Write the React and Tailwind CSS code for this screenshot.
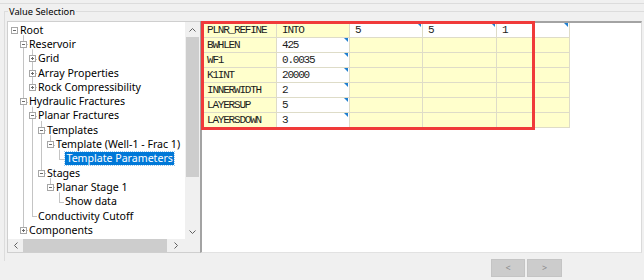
import React from "react";

const treeRows = [
  { t: "Root", l: 0, e: "-" },
  { t: "Reservoir", l: 1, e: "-" },
  { t: "Grid", l: 2, e: "+" },
  { t: "Array Properties", l: 2, e: "+" },
  { t: "Rock Compressibility", l: 2, e: "+" },
  { t: "Hydraulic Fractures", l: 1, e: "-" },
  { t: "Planar Fractures", l: 2, e: "-" },
  { t: "Templates", l: 3, e: "-" },
  { t: "Template (Well-1 - Frac 1)", l: 4, e: "-" },
  { t: "Template Parameters", l: 5, sel: true },
  { t: "Stages", l: 3, e: "-" },
  { t: "Planar Stage 1", l: 4, e: "-" },
  { t: "Show data", l: 5 },
  { t: "Conductivity Cutoff", l: 2 },
  { t: "Components", l: 1, e: "+" },
];

const RH = 14.3;
const cy = (i) => 8.15 + RH * i;
const lx = (l) => 6 + 9 * l;

const vlines = [
  [1, 0, 14],
  [2, 1, 4],
  [2, 5, 13],
  [3, 6, 10],
  [4, 7, 8],
  [5, 8, 9],
  [4, 10, 11],
  [5, 11, 12],
];

function Expander({ sign }) {
  return (
    <div className="relative w-[7px] h-[7px] border border-[#a6a6a6] bg-white shrink-0">
      <div className="absolute left-[1px] top-[2px] w-[3px] h-px bg-[#6a6a6a]" />
      {sign === "+" && (
        <div className="absolute left-[2px] top-[1px] w-px h-[3px] bg-[#6a6a6a]" />
      )}
    </div>
  );
}

function Tree() {
  return (
    <div className="relative w-[193px] h-[232px] border-l border-t border-b border-[#cfcfcf] bg-white overflow-hidden">
      <div className="relative w-[176px] h-[217px] pt-px">
        <svg className="absolute left-0 top-0" width="176" height="217">
          {vlines.map(([l, a, b], k) => (
            <line
              key={k}
              x1={lx(l) + 0.5}
              x2={lx(l) + 0.5}
              y1={cy(a) + 5}
              y2={cy(b) + 0.5}
              stroke="#c4c4c4"
              strokeWidth="1"
            />
          ))}
          {treeRows.map((r, i) =>
            r.l > 0 ? (
              <line
                key={"h" + i}
                x1={lx(r.l)}
                x2={lx(r.l) + 5}
                y1={Math.round(cy(i)) + 0.5}
                y2={Math.round(cy(i)) + 0.5}
                stroke="#c4c4c4"
                strokeWidth="1"
              />
            ) : null
          )}
        </svg>
        {treeRows.map((r, i) => (
          <div
            key={i}
            className="relative flex items-center h-[14.3px] text-[10.6px] text-black whitespace-nowrap"
          >
            <div className="shrink-0" style={{ width: 3 + 9 * r.l }} />
            {r.e ? <Expander sign={r.e} /> : <div className="w-[7px] shrink-0" />}
            {r.sel ? (
              <span className="ml-[2px] px-[1.5px] h-[13px] leading-[13px] bg-[#0078d7] text-white outline outline-1 outline-dotted outline-[#99c9ef]">
                {r.t}
              </span>
            ) : (
              <span className="ml-[2px] leading-[13px]">{r.t}</span>
            )}
          </div>
        ))}
      </div>
      {/* vertical scrollbar */}
      <div className="absolute right-0 top-0 w-[15px] h-[217px] bg-[#f0f0f0] flex flex-col items-center">
        <div className="h-[15px] flex items-center justify-center text-[#606060]">
          <svg width="7" height="4"><polyline points="0.5,3.5 3.5,0.5 6.5,3.5" fill="none" stroke="#606060" strokeWidth="1" /></svg>
        </div>
        <div className="w-[13px] h-[140px] bg-[#cdcdcd]" />
        <div className="flex-1" />
        <div className="h-[15px] flex items-center justify-center">
          <svg width="7" height="4"><polyline points="0.5,0.5 3.5,3.5 6.5,0.5" fill="none" stroke="#606060" strokeWidth="1" /></svg>
        </div>
      </div>
      {/* horizontal scrollbar */}
      <div className="absolute left-0 bottom-0 w-[193px] h-[13px] flex bg-[#f0f0f0]">
        <div className="w-[15px] flex items-center justify-center">
          <svg width="4" height="7"><polyline points="3.5,0.5 0.5,3.5 3.5,6.5" fill="none" stroke="#606060" strokeWidth="1" /></svg>
        </div>
        <div className="w-[144px] h-[13px] bg-[#cdcdcd]" />
        <div className="w-[18px] flex items-center justify-center">
          <svg width="4" height="7"><polyline points="0.5,0.5 3.5,3.5 0.5,6.5" fill="none" stroke="#606060" strokeWidth="1" /></svg>
        </div>
        <div className="flex-1 bg-[#f0f0f0]" />
      </div>
    </div>
  );
}

const colW = [75, 73, 73, 74, 73];

const gridRows = [
  ["PLNR_REFINE", "INTO", "5", "5", "1"],
  ["BWHLEN", "425", "", "", ""],
  ["WF1", "0.0035", "", "", ""],
  ["K1INT", "20000", "", "", ""],
  ["INNERWIDTH", "2", "", "", ""],
  ["LAYERSUP", "5", "", "", ""],
  ["LAYERSDOWN", "3", "", "", ""],
];

function Cell({ text, white, tri, w }) {
  return (
    <div
      className={`relative h-[15px] border-r border-b border-[#dedcc8] pl-[5px] flex items-center text-[11px] tracking-[-1.2px] text-[#1c1c1c] ${
        white ? "bg-white" : "bg-[#ffffcc]"
      }`}
      style={{ width: w, fontFamily: '"Liberation Mono", monospace' }}
    >
      {text}
      {tri && (
        <div className="absolute top-0 right-[1px] w-0 h-0 border-t-[4px] border-l-[4px] border-t-[#1f7fd0] border-l-transparent" />
      )}
    </div>
  );
}

function Grid() {
  return (
    <div className="relative w-[442px] h-[232px] border-t-2 border-l-2 border-[#a3a3a3] bg-white border-r border-r-[#dadada] border-b border-b-[#e2e2e2]">
      <div className="flex flex-col">
        {gridRows.map((r, i) => (
          <div key={i} className="flex">
            {r.map((c, j) => {
              const white = i === 0 ? j >= 2 : j === 1;
              return <Cell key={j} text={c} white={white} tri={white} w={colW[j]} />;
            })}
          </div>
        ))}
      </div>
      <div className="absolute left-[-1px] top-[-2px] w-[334px] h-[109px] border-[3px] border-[#f03a3a]" />
    </div>
  );
}

export default function App() {
  return (
    <div
      className="w-[644px] h-[280px] bg-[#f0f0f0] overflow-hidden relative"
      style={{ fontFamily: '"Noto Sans", sans-serif' }}
    >
      <div className="h-[4px] border-b border-[#dcdcdc]" />
      <div className="relative mt-[7px] ml-[4px] border-t border-l border-[#dcdcdc] h-[250px]">
        <div className="absolute left-[3px] top-[-7px] px-px bg-[#f0f0f0] text-[9.3px] leading-[13px] text-black">
          Value Selection
        </div>
        <div className="flex pt-[9px] pl-[2px]">
          <Tree />
          <Grid />
        </div>
      </div>
      <div className="absolute left-[491px] top-[259px] flex gap-[2px]">
        <div className="w-[34px] h-[18px] bg-[#cccccc] border border-[#c4c4c4] flex items-center justify-center text-[9px] text-[#8a8a8a]">
          &lt;
        </div>
        <div className="w-[35px] h-[18px] bg-[#cccccc] border border-[#c4c4c4] flex items-center justify-center text-[9px] text-[#8a8a8a]">
          &gt;
        </div>
      </div>
    </div>
  );
}
